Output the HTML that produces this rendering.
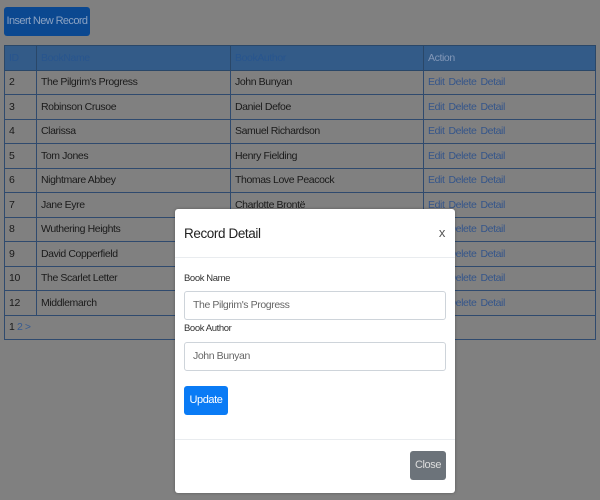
<!DOCTYPE html>
<html><head><style>
*{box-sizing:border-box;margin:0;padding:0}
body{width:600px;height:500px;background:#808080;font-family:"Liberation Sans",sans-serif;font-size:10.5px;letter-spacing:-0.4px;color:#1a1a1a;position:relative;overflow:hidden}
.btn{position:absolute;left:4px;top:7px;width:86px;height:29px;background:#0b4890;border-radius:3px;color:#8ba2c2;font-size:11px;line-height:29px;text-align:center;letter-spacing:-0.6px}
table{position:absolute;left:4px;top:45px;width:592px;border-collapse:collapse}
td,th{border:1px solid #2f4a6e;height:24.5px;padding:0 4px;text-align:left;font-weight:normal;white-space:nowrap}
th{background:#335b88;color:#28558e;border-color:#2a4768}
th.a{color:#8398b8}
td a{color:#34558a;margin-right:4px}
.c1{width:32px}.c2{width:194px}.c3{width:193px}
.pg span{color:#365a90}
.modal{position:absolute;left:175px;top:209px;width:280px;height:284px;background:#fff;border-radius:3px;box-shadow:0 0 3px rgba(0,0,0,.3)}
.hd{height:49px;border-bottom:1px solid #e9ecef;padding:0 9px;font-size:13.5px;letter-spacing:-0.4px;line-height:49px;color:#222}
.x{position:absolute;right:10px;top:15px;font-size:13px;color:#555;line-height:18px}
label{position:absolute;left:9px;font-size:9.5px;letter-spacing:-0.4px;color:#333}
.in{position:absolute;left:9px;width:262px;height:29px;border:1px solid #ced4da;border-radius:3px;font-size:10.5px;letter-spacing:-0.4px;color:#666;line-height:27px;padding-left:8px}
.up{position:absolute;left:9px;top:177px;width:44px;height:29px;background:#0a7bf5;border-radius:3px;color:#fff;font-size:11px;line-height:29px;text-align:center}
.ft{position:absolute;left:0;right:0;top:230px;border-top:1px solid #e9ecef}
.cl{position:absolute;left:235px;top:242px;width:36px;height:29px;background:#6c737a;border-radius:3px;color:#dcdcdc;font-size:11px;line-height:29px;text-align:center}
</style></head><body>
<div class="btn">Insert New Record</div>
<table>
<tr><th class="c1">ID</th><th class="c2">BookName</th><th class="c3">BookAuthor</th><th class="a">Action</th></tr>
<tr><td>2</td><td>The Pilgrim's Progress</td><td>John Bunyan</td><td><a>Edit</a><a>Delete</a><a>Detail</a></td></tr>
<tr><td>3</td><td>Robinson Crusoe</td><td>Daniel Defoe</td><td><a>Edit</a><a>Delete</a><a>Detail</a></td></tr>
<tr><td>4</td><td>Clarissa</td><td>Samuel Richardson</td><td><a>Edit</a><a>Delete</a><a>Detail</a></td></tr>
<tr><td>5</td><td>Tom Jones</td><td>Henry Fielding</td><td><a>Edit</a><a>Delete</a><a>Detail</a></td></tr>
<tr><td>6</td><td>Nightmare Abbey</td><td>Thomas Love Peacock</td><td><a>Edit</a><a>Delete</a><a>Detail</a></td></tr>
<tr><td>7</td><td>Jane Eyre</td><td>Charlotte Brontë</td><td><a>Edit</a><a>Delete</a><a>Detail</a></td></tr>
<tr><td>8</td><td>Wuthering Heights</td><td>Emily Brontë</td><td><a>Edit</a><a>Delete</a><a>Detail</a></td></tr>
<tr><td>9</td><td>David Copperfield</td><td>Charles Dickens</td><td><a>Edit</a><a>Delete</a><a>Detail</a></td></tr>
<tr><td>10</td><td>The Scarlet Letter</td><td>Nathaniel Hawthorne</td><td><a>Edit</a><a>Delete</a><a>Detail</a></td></tr>
<tr><td>12</td><td>Middlemarch</td><td>George Eliot</td><td><a>Edit</a><a>Delete</a><a>Detail</a></td></tr>
<tr><td colspan="4" class="pg">1 <span>2 &gt;</span></td></tr>
</table>
<div class="modal">
<div class="hd">Record Detail</div><div class="x">x</div>
<label style="top:64px">Book Name</label>
<div class="in" style="top:82px">The Pilgrim's Progress</div>
<label style="top:114px">Book Author</label>
<div class="in" style="top:133px">John Bunyan</div>
<div class="up">Update</div>
<div class="ft"></div>
<div class="cl">Close</div>
</div>
</body></html>
